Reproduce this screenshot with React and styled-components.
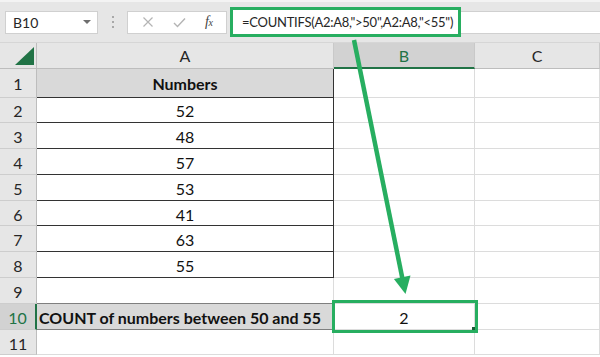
import React from "react";
import styled, { createGlobalStyle } from "styled-components";

const GREEN = "#27ae60";
const XL = "#217346";
const FONT = `Lato, "Open Sans", Arial, sans-serif`;

const Global = createGlobalStyle`
  html, body { margin: 0; padding: 0; background: #fff; overflow: hidden; }
  * { box-sizing: border-box; }
`;

const Page = styled.div`
  position: relative;
  width: 600px;
  height: 357px;
  overflow: hidden;
  font-family: ${FONT};
  color: #1f1f1f;
`;

const TopBar = styled.div`
  height: 43px;
  background: #e6e6e6;
  border-top: 2px solid #f3f3f3;
  border-bottom: 1px solid #d6d6d6;
  display: flex;
  align-items: center;
  padding-left: 5px;
`;

const NameBox = styled.div`
  width: 93px;
  height: 23px;
  background: #fff;
  border: 1px solid #d0d0d0;
  display: flex;
  align-items: center;
  justify-content: space-between;
  padding: 0 6px 0 7px;
  font-size: 14px;
  color: #262626;
`;

const Caret = styled.span`
  width: 0;
  height: 0;
  border-left: 4px solid transparent;
  border-right: 4px solid transparent;
  border-top: 4px solid #6e6e6e;
`;

const Grip = styled.div`
  width: 29px;
  display: flex;
  flex-direction: column;
  align-items: center;
  gap: 3px;
  & > i {
    width: 2px;
    height: 2px;
    background: #a8a8a8;
    display: block;
  }
`;

const FnButtons = styled.div`
  width: 100px;
  height: 23px;
  background: #fff;
  border: 1px solid #d0d0d0;
  display: flex;
  align-items: center;
  justify-content: space-around;
  padding: 0 4px;
`;

const Fx = styled.span`
  font-family: "Liberation Serif", "DejaVu Serif", serif;
  font-style: italic;
  font-size: 14px;
  color: #444;
  letter-spacing: -0.5px;
  & > small { font-size: 10px; }
`;

const FormulaField = styled.div`
  flex: 1;
  height: 23px;
  margin-left: 3px;
  background: #fff;
  border: 1px solid #d0d0d0;
  border-right: none;
  display: flex;
  align-items: center;
`;

const Highlight = styled.div`
  width: 231px;
  height: 30px;
  margin-left: -1px;
  border: 3px solid ${GREEN};
  background: #fff;
  display: flex;
  align-items: center;
  padding-left: 9px;
  font-size: 13px;
  letter-spacing: -0.25px;
  color: #262626;
  white-space: nowrap;
`;

const Sheet = styled.div`
  display: grid;
  grid-template-columns: 37px 297px 141px 1fr;
  grid-template-rows: 26px 28.5px repeat(10, 25.8px);
`;

const ColHead = styled.div`
  background: ${(p) => (p.$sel ? "#d2d2d2" : "#e6e6e6")};
  border-right: 1px solid #c9c9c9;
  border-bottom: ${(p) => (p.$sel ? `2px solid ${XL}` : "1px solid #bdbdbd")};
  color: ${(p) => (p.$sel ? XL : "#262626")};
  display: flex;
  align-items: center;
  justify-content: center;
  font-size: 16px;
`;

const Corner = styled.div`
  background: #e6e6e6;
  border-right: 1px solid #bdbdbd;
  border-bottom: 1px solid #bdbdbd;
  display: flex;
  align-items: flex-end;
  justify-content: flex-end;
  padding: 0 2px 3px 0;
`;

const Tri = styled.span`
  width: 0;
  height: 0;
  border-left: 19px solid transparent;
  border-bottom: 18px solid ${XL};
`;

const RowHead = styled.div`
  background: ${(p) => (p.$sel ? "#d2d2d2" : "#e6e6e6")};
  border-right: ${(p) => (p.$sel ? `2px solid ${XL}` : "1px solid #bdbdbd")};
  border-bottom: 1px solid #cdcdcd;
  color: ${(p) => (p.$sel ? XL : "#262626")};
  display: flex;
  align-items: center;
  justify-content: center;
  font-size: 16px;
  padding-top: 2px;
`;

const Cell = styled.div`
  position: relative;
  background: ${(p) => p.$fill || "#fff"};
  border-right: 1px solid ${(p) => p.$right || "#dcdcdc"};
  border-bottom: 1px solid ${(p) => p.$bottom || "#dcdcdc"};
  display: flex;
  align-items: center;
  justify-content: ${(p) => (p.$left ? "flex-start" : "center")};
  padding: 2px 0 0 ${(p) => (p.$left ? "2px" : "0")};
  font-size: 16px;
  font-weight: ${(p) => (p.$bold ? 700 : 400)};
  color: #111;
  white-space: nowrap;
`;

const ActiveCell = styled(Cell)`
  overflow: visible;
  z-index: 2;
  &::after {
    content: "";
    position: absolute;
    top: -4px;
    left: -2px;
    right: -4px;
    bottom: -4px;
    border: 3px solid ${GREEN};
    pointer-events: none;
  }
  &::before {
    content: "";
    position: absolute;
    right: -1px;
    bottom: -1px;
    width: 3px;
    height: 3px;
    background: #1a5c37;
    z-index: 3;
  }
`;

const ArrowSvg = styled.svg`
  position: absolute;
  left: 0;
  top: 0;
  pointer-events: none;
  z-index: 5;
`;

const DARK = "#333333";
const numbers = [52, 48, 57, 53, 41, 63, 55];

export default function App() {
  return (
    <Page>
      <Global />
      <TopBar>
        <NameBox>
          B10
          <Caret />
        </NameBox>
        <Grip>
          <i />
          <i />
          <i />
        </Grip>
        <FnButtons>
          <svg width="12" height="12" viewBox="0 0 12 12">
            <path d="M1.5 1.5 L10.5 10.5 M10.5 1.5 L1.5 10.5" stroke="#b4b4b4" strokeWidth="1.2" fill="none" />
          </svg>
          <svg width="13" height="11" viewBox="0 0 13 11">
            <path d="M1 6 L4.5 9.5 L12 1.5" stroke="#b4b4b4" strokeWidth="1.4" fill="none" />
          </svg>
          <Fx>
            f<small>x</small>
          </Fx>
        </FnButtons>
        <FormulaField>
          <Highlight>=COUNTIFS(A2:A8,"&gt;50",A2:A8,"&lt;55")</Highlight>
        </FormulaField>
      </TopBar>

      <Sheet>
        <Corner>
          <Tri />
        </Corner>
        <ColHead>A</ColHead>
        <ColHead $sel>B</ColHead>
        <ColHead>C</ColHead>

        <RowHead>1</RowHead>
        <Cell $fill="#d9d9d9" $bold $right={DARK} $bottom={DARK}>
          Numbers
        </Cell>
        <Cell />
        <Cell />

        {numbers.map((n, i) => (
          <React.Fragment key={n + "-" + i}>
            <RowHead>{i + 2}</RowHead>
            <Cell $right={DARK} $bottom={DARK}>
              {n}
            </Cell>
            <Cell />
            <Cell />
          </React.Fragment>
        ))}

        <RowHead>9</RowHead>
        <Cell $bottom="#7f7f7f" />
        <Cell />
        <Cell />

        <RowHead $sel>10</RowHead>
        <Cell $fill="#d9d9d9" $bold $left $right="#7f7f7f" $bottom="#7f7f7f">
          COUNT of numbers between 50 and 55
        </Cell>
        <ActiveCell>2</ActiveCell>
        <Cell />

        <RowHead>11</RowHead>
        <Cell />
        <Cell />
        <Cell />
      </Sheet>

      <ArrowSvg width="600" height="357" viewBox="0 0 600 357">
        <line x1="354" y1="40" x2="402.5" y2="279" stroke={GREEN} strokeWidth="4.5" />
        <polygon points="393.9,279 410.5,275.6 405.5,294" fill={GREEN} />
      </ArrowSvg>
    </Page>
  );
}
